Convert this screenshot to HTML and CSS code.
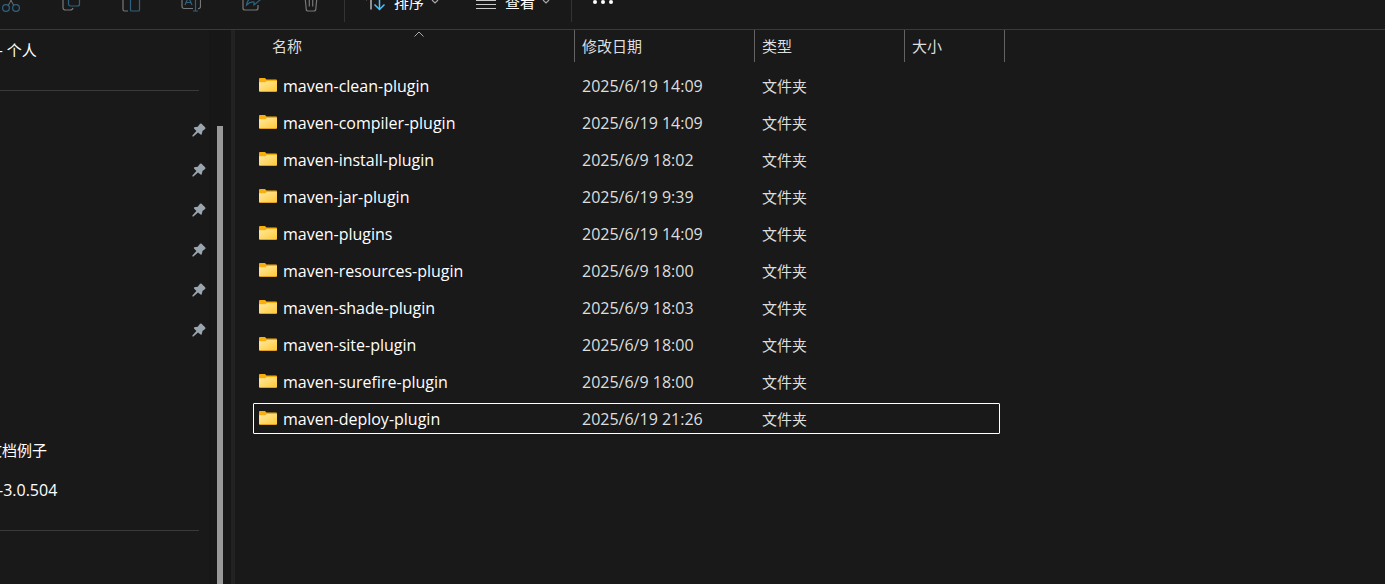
FILE: index.html
```html
<!DOCTYPE html>
<html lang="zh-CN">
<head>
<meta charset="utf-8">
<title>maven plugins</title>
<link rel="stylesheet" href="styles.css">
</head>
<body>
<svg class="defs" aria-hidden="true">
  <defs>
    <linearGradient id="paper" x1="0" y1="0" x2="1" y2="1">
      <stop offset="0" stop-color="#ffe9a0"/>
      <stop offset="1" stop-color="#ffca3a"/>
    </linearGradient>
    <symbol id="folder" viewBox="0 0 18 14">
      <path d="M0 1a1 1 0 0 1 1-1h5l1.500 1.500H17a1 1 0 0 1 1 1V6H0z" fill="#f9ae10"/>
      <path d="M0 4.200h6.200L8 3h10v10H0z" fill="url(#paper)"/>
      <path d="M0 13h18a1 1 0 0 1-1 1H1a1 1 0 0 1-1-1z" fill="#dfa128"/>
    </symbol>
    <symbol id="pin" viewBox="0 0 14 14">
      <path d="M8 .800q.800-.600 1.600 0l3.700 3.700q.500.800-.2 1.500L10.500 8l-.7 3.200q-.5.800-1.200.300L6 9.500l-4.600 4H.4v-1L4.400 8 2 5.600q-.4-.8.300-1.300l3.400-.6z" fill="#9aa6ae"/>
    </symbol>
  </defs>
</svg>
<div class="explorer">
  <header class="toolbar">
    <div class="tools">
      <button class="tool" aria-label="剪切"><svg width="20" height="20" viewBox="0 0 20 20"><g fill="none" stroke="#777"><path d="M6 1l6.500 12M14 1L7.500 13"/></g><g fill="none" stroke="#2d6380" stroke-width="1.200"><circle cx="5" cy="16" r="3.400"/><circle cx="15" cy="16" r="3.400"/></g></svg></button>
      <button class="tool" aria-label="复制"><svg width="20" height="20" viewBox="0 0 20 20"><path d="M4.500 3.500c-1 0-2.500 1-2.500 2.500v9.500A2.500 2.500 0 0 0 4.500 18H9c1.500 0 2.700-.6 3-2" fill="none" stroke="#777" stroke-width="1.200"/><rect x="7.500" y="1" width="11" height="13" rx="2" fill="none" stroke="#2d6380" stroke-width="1.200"/></svg></button>
      <button class="tool" aria-label="粘贴"><svg width="20" height="20" viewBox="0 0 20 20"><path d="M7 19H3.500A1.500 1.500 0 0 1 2 17.500V3h12" fill="none" stroke="#777" stroke-width="1.200"/><rect x="9.500" y="5" width="9" height="14" rx="1" fill="none" stroke="#2d6380" stroke-width="1.200"/></svg></button>
      <button class="tool" aria-label="重命名"><svg width="20" height="20" viewBox="0 0 20 20"><path d="M12 16.500H3A2 2 0 0 1 1 14.500V5a2 2 0 0 1 2-2h9M17 3a2 2 0 0 1 2.500 2v9.500a2 2 0 0 1-2.500 2" fill="none" stroke="#777" stroke-width="1.200"/><path d="M4 13L7.500 5 11 13M5 10.500h5M14.500 1v18M12 1h5M12 19h5" fill="none" stroke="#2d6380" stroke-width="1.200"/></svg></button>
      <button class="tool" aria-label="共享"><svg width="20" height="20" viewBox="0 0 20 20"><path d="M8 3H4a2 2 0 0 0-2 2v11a2 2 0 0 0 2 2h11a2 2 0 0 0 2-2V13" fill="none" stroke="#777" stroke-width="1.200"/><path d="M13 2l6 6-6 5v-3c-3-.5-5 .5-7.500 3C6 9 9 6 13 5.500z" fill="none" stroke="#2d6380" stroke-width="1.200"/></svg></button>
      <button class="tool" aria-label="删除"><svg width="20" height="20" viewBox="0 0 20 20"><path d="M2 4.500h16M4 4.500l1.200 12.500a2 2 0 0 0 2 2h5.600a2 2 0 0 0 2-2L16 4.500M8.300 8v6.500M11.700 8v6.500" fill="none" stroke="#777" stroke-width="1.200"/></svg></button>
    </div>
    <button class="menu menu-sort"><svg width="20" height="20" viewBox="0 0 20 20"><path d="M6 17.500V3M1 8l5-5 4 4" fill="none" stroke="#ddd" stroke-width="1.200"/><path d="M14.500 3v14M9.500 12.500l5 5 5-5" fill="none" stroke="#4cc2ff" stroke-width="1.500"/></svg><span>排序</span><svg width="8" height="6" viewBox="0 0 8 6"><path d="M1 1l3 3 3-3" fill="none" stroke="#aaa" stroke-width="1.200"/></svg></button>
    <button class="menu menu-view"><svg width="20" height="20" viewBox="0 0 20 20"><path d="M0 4.500h20M0 8.500h20M0 12.500h20M0 16.500h20" stroke="#ccc"/></svg><span>查看</span><svg width="8" height="6" viewBox="0 0 8 6"><path d="M1 1l3 3 3-3" fill="none" stroke="#aaa" stroke-width="1.200"/></svg></button>
    <button class="more" aria-label="更多"><svg width="22" height="6" viewBox="0 0 22 6"><g fill="#fff"><circle cx="3" cy="3" r="2"/><circle cx="11" cy="3" r="2"/><circle cx="19" cy="3" r="2"/></g></svg></button>
  </header>
  <div class="body">
    <nav class="sidebar">
      <ul class="tree">
        <li class="entry short">- 个人</li>
        <li class="entry"><hr class="rule"></li>
        <li class="entry"><svg class="pin"><use href="#pin"/></svg></li>
        <li class="entry"><svg class="pin"><use href="#pin"/></svg></li>
        <li class="entry"><svg class="pin"><use href="#pin"/></svg></li>
        <li class="entry"><svg class="pin"><use href="#pin"/></svg></li>
        <li class="entry"><svg class="pin"><use href="#pin"/></svg></li>
        <li class="entry"><svg class="pin"><use href="#pin"/></svg></li>
        <li class="entry"></li>
        <li class="entry"></li>
        <li class="entry">文档例子</li>
        <li class="entry short latin">-3.0.504</li>
        <li class="entry"><hr class="rule"></li>
      </ul>
      <div class="track"><div class="thumb"></div></div>
    </nav>
    <main class="files">
      <table class="list">
        <thead>
          <tr class="head"><th class="sorted">名称<svg class="caret" viewBox="0 0 10 6"><path d="M.500 5.500L5 1l4.500 4.500" fill="none" stroke="#aaa"/></svg></th><th>修改日期</th><th>类型</th><th>大小</th></tr>
        </thead>
        <tbody>
          <tr class="row"><td class="name latin"><svg class="folder"><use href="#folder"/></svg>maven-clean-plugin</td><td class="latin">2025/6/19 14:09</td><td>文件夹</td><td></td></tr>
          <tr class="row"><td class="name latin"><svg class="folder"><use href="#folder"/></svg>maven-compiler-plugin</td><td class="latin">2025/6/19 14:09</td><td>文件夹</td><td></td></tr>
          <tr class="row"><td class="name latin"><svg class="folder"><use href="#folder"/></svg>maven-install-plugin</td><td class="latin">2025/6/9 18:02</td><td>文件夹</td><td></td></tr>
          <tr class="row"><td class="name latin"><svg class="folder"><use href="#folder"/></svg>maven-jar-plugin</td><td class="latin">2025/6/19 9:39</td><td>文件夹</td><td></td></tr>
          <tr class="row"><td class="name latin"><svg class="folder"><use href="#folder"/></svg>maven-plugins</td><td class="latin">2025/6/19 14:09</td><td>文件夹</td><td></td></tr>
          <tr class="row"><td class="name latin"><svg class="folder"><use href="#folder"/></svg>maven-resources-plugin</td><td class="latin">2025/6/9 18:00</td><td>文件夹</td><td></td></tr>
          <tr class="row"><td class="name latin"><svg class="folder"><use href="#folder"/></svg>maven-shade-plugin</td><td class="latin">2025/6/9 18:03</td><td>文件夹</td><td></td></tr>
          <tr class="row"><td class="name latin"><svg class="folder"><use href="#folder"/></svg>maven-site-plugin</td><td class="latin">2025/6/9 18:00</td><td>文件夹</td><td></td></tr>
          <tr class="row"><td class="name latin"><svg class="folder"><use href="#folder"/></svg>maven-surefire-plugin</td><td class="latin">2025/6/9 18:00</td><td>文件夹</td><td></td></tr>
          <tr class="row focused"><td class="name latin"><svg class="folder"><use href="#folder"/></svg>maven-deploy-plugin</td><td class="latin">2025/6/19 21:26</td><td>文件夹</td><td></td></tr>
        </tbody>
      </table>
    </main>
  </div>
</div>
</body>
</html>
```
FILE: styles.css
```css
* { box-sizing: border-box; }

body {
  margin: 0;
  background: #191919;
  color: #fff;
  font: 15px/20px "Open Sans", "Noto Sans CJK SC", sans-serif;
  overflow: hidden;
}

.latin { font-size: 16px; }

.defs { position: absolute; width: 0; height: 0; }

.explorer { display: flex; flex-direction: column; height: 100vh; }

.toolbar {
  flex: none;
  display: flex;
  align-items: center;
  height: 56px;
  margin-top: -26px;
  border-bottom: 1px solid #3a3a3a;
}

button {
  display: flex;
  align-items: center;
  margin: 0;
  padding: 0;
  border: 0;
  background: none;
  color: #fff;
  font: inherit;
}

.tools {
  display: flex;
  gap: 40px;
  height: 40px;
  padding: 0 23px 0 1px;
  border-right: 1px solid #333;
}

.menu { height: 40px; }
.menu svg:last-child { margin-left: 7px; }
.menu span { margin-left: 9px; }
.menu-sort { padding-left: 20px; }
.menu-view { padding: 0 21px 0 37px; border-right: 1px solid #333; }
.more { margin-left: 20px; }

.body { flex: 1; display: flex; min-height: 0; }

.sidebar {
  flex: none;
  display: flex;
  width: 235px;
  overflow: hidden;
  border-right: 4px solid #222;
}

.tree {
  flex: 1;
  margin: 0 0 0 -13px;
  padding: 0;
  list-style: none;
}

.entry { display: flex; align-items: center; height: 40px; }
.short { padding-left: 11px; }
.rule { flex: 1; margin: 0 10px 0 0; border: 0; border-top: 1px solid #3a3a3a; }
.pin { width: 14px; height: 14px; margin: 0 3px 0 auto; }

.track { width: 22px; padding: 96px 8px 0; background: #171717; }
.thumb { height: 100%; background: #999; }

.files { flex: 1; min-width: 0; padding-left: 18px; }

.list { display: block; color: #dedede; }
.list thead { display: block; }
.list tbody { display: grid; gap: 6px; padding-top: 8px; }

.head, .row { display: grid; align-items: center; }
.head { grid-template-columns: 322px 180px 150px 100px; width: 752px; }
.row { grid-template-columns: 321px 180px 150px 94px; width: 747px; height: 31px; border: 1px solid transparent; border-radius: 1px; }
.focused { border-color: #fff; }

th {
  position: relative;
  height: 32px;
  padding: 6px 7px;
  border-right: 1px solid #636363;
  font-weight: 400;
  text-align: left;
}
.sorted { padding-left: 19px; }
.caret { position: absolute; top: 1px; left: 161px; width: 10px; height: 6px; }

td { padding: 0 7px; }
.name { display: flex; align-items: center; gap: 6px; padding: 0 5px; color: #fff; }
.folder { width: 18px; height: 14px; margin-bottom: 2px; }
```
